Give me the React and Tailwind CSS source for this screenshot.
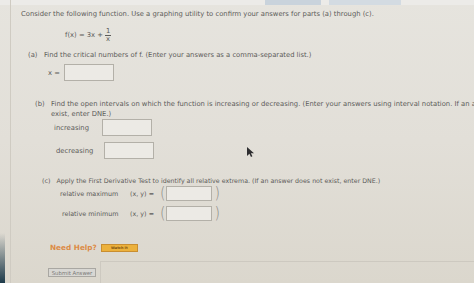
import React from "react";

const Box = ({ w, h, className = "" }) => (
  <div
    className={`border border-[#b3b0a8] bg-[#eceae5] ${className}`}
    style={{ width: w, height: h }}
  />
);

const Paren = ({ children, className = "" }) => (
  <span
    className={`inline-block text-[14px] leading-[15px] font-extralight text-[#8a8884] scale-y-[1.1] ${className}`}
  >
    {children}
  </span>
);

export default function App() {
  return (
    <div
      className="relative w-[474px] h-[283px] overflow-hidden bg-gradient-to-b from-[#e6e4de] via-[#e2dfd8] to-[#dbd7cd] text-[#5c5b59]"
      style={{ fontFamily: '"DejaVu Sans", Verdana, sans-serif' }}
    >
      {/* top strip */}
      <div className="absolute top-0 left-0 right-0 h-[5px] flex bg-[#ecebe8]">
        <div className="w-[265px]" />
        <div className="w-[56px] bg-[#c9d3dc]" />
        <div className="w-[8px]" />
        <div className="w-[72px] bg-[#d3dbe2]" />
      </div>
      {/* faint left edge line */}
      <div className="absolute top-0 bottom-0 left-[10px] w-px bg-[#cfcbc2]" />
      {/* bottom-left dark corner */}
      <div className="absolute left-0 bottom-0 w-[5px] h-[50px] bg-gradient-to-b from-transparent to-[#1d3a4a]" />

      <div className="flex flex-col text-[6.8px] leading-[8px]">
        <div className="mt-[10px] ml-[21px] whitespace-nowrap">
          Consider the following function. Use a graphing utility to confirm your answers for parts (a) through (c).
        </div>

        {/* f(x) */}
        <div className="mt-[9px] ml-[65px] flex items-center h-[16px] whitespace-nowrap">
          <span>f(x) = 3x +&nbsp;</span>
          <span className="flex flex-col items-center leading-[7px]">
            <span>1</span>
            <span className="w-[6px] h-px bg-[#5c5b59]" />
            <span>x</span>
          </span>
        </div>

        <div className="mt-[8px] ml-[28px] whitespace-nowrap">
          (a)&nbsp;&nbsp; Find the critical numbers of f. (Enter your answers as a comma-separated list.)
        </div>

        <div className="mt-[5px] ml-[48px] flex items-center gap-[4px]">
          <span>x =</span>
          <Box w={50} h={17} />
        </div>

        <div className="mt-[18px] ml-[35px] leading-[10px] whitespace-nowrap">
          <div>
            (b)&nbsp;&nbsp; Find the open intervals on which the function is increasing or decreasing. (Enter your answers using interval notation. If an answer
          </div>
          <div className="ml-[16px]">exist, enter DNE.)</div>
        </div>

        <div className="ml-[54px] flex items-center">
          <span className="w-[48px]">increasing</span>
          <Box w={50} h={17} />
        </div>
        <div className="mt-[6px] ml-[56px] flex items-center">
          <span className="w-[48px]">decreasing</span>
          <Box w={50} h={17} />
        </div>

        <div className="mt-[18px] ml-[42px] whitespace-nowrap text-[6.3px]">
          (c)&nbsp;&nbsp; Apply the First Derivative Test to identify all relative extrema. (If an answer does not exist, enter DNE.)
        </div>

        <div className="mt-[1px] ml-[60px] flex items-center h-[15px]">
          <span className="w-[70px] text-[6.4px]">relative maximum</span>
          <span className="w-[30px] text-[6.4px]">(x, y) =</span>
          <Paren>(</Paren>
          <Box w={46} h={15} className="ml-[1px]" />
          <Paren className="ml-[2px]">)</Paren>
        </div>
        <div className="mt-[5px] ml-[62px] flex items-center h-[15px]">
          <span className="w-[68px] text-[6.4px]">relative minimum</span>
          <span className="w-[30px] text-[6.4px]">(x, y) =</span>
          <Paren>(</Paren>
          <Box w={46} h={15} className="ml-[1px]" />
          <Paren className="ml-[2px]">)</Paren>
        </div>

        <div className="mt-[22px] ml-[50px] flex items-center h-[9px] gap-[4px]">
          <span className="text-[7.3px] font-bold text-[#dc8b45] whitespace-nowrap">Need Help?</span>
          <span className="w-[37px] h-[8px] bg-[#ecb13c] border border-[#c98e30] flex items-center justify-center text-[3.5px] leading-[4px] font-bold text-[#7a5010]">
            Watch It
          </span>
        </div>

        <div className="mt-[9px] ml-[100px] h-[22px] border-t border-l border-[#cdc9c0]" />
        <div className="-mt-[15px] ml-[48px] w-[48px] h-[9px] bg-[#d8d7d3] border border-[#a9a7a2] flex items-center justify-center text-[5.4px] leading-[6px] text-[#7b7a77] whitespace-nowrap">
          Submit Answer
        </div>
      </div>

      {/* mouse cursor */}
      <svg className="absolute left-[246px] top-[146px]" width="9" height="12" viewBox="0 0 9 12">
        <path d="M1 1 L1 10 L3.4 7.8 L5 11 L6.4 10.3 L4.9 7.2 L8 7.2 Z" fill="#2e2e30" />
      </svg>
    </div>
  );
}
